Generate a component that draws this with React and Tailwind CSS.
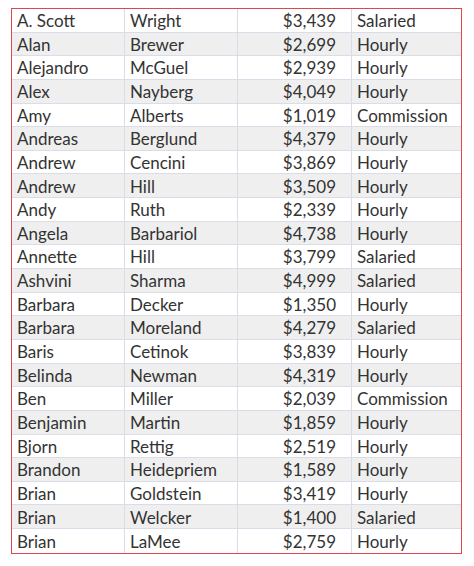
const rows = [
  ["A. Scott", "Wright", "$3,439", "Salaried"],
  ["Alan", "Brewer", "$2,699", "Hourly"],
  ["Alejandro", "McGuel", "$2,939", "Hourly"],
  ["Alex", "Nayberg", "$4,049", "Hourly"],
  ["Amy", "Alberts", "$1,019", "Commission"],
  ["Andreas", "Berglund", "$4,379", "Hourly"],
  ["Andrew", "Cencini", "$3,869", "Hourly"],
  ["Andrew", "Hill", "$3,509", "Hourly"],
  ["Andy", "Ruth", "$2,339", "Hourly"],
  ["Angela", "Barbariol", "$4,738", "Hourly"],
  ["Annette", "Hill", "$3,799", "Salaried"],
  ["Ashvini", "Sharma", "$4,999", "Salaried"],
  ["Barbara", "Decker", "$1,350", "Hourly"],
  ["Barbara", "Moreland", "$4,279", "Salaried"],
  ["Baris", "Cetinok", "$3,839", "Hourly"],
  ["Belinda", "Newman", "$4,319", "Hourly"],
  ["Ben", "Miller", "$2,039", "Commission"],
  ["Benjamin", "Martin", "$1,859", "Hourly"],
  ["Bjorn", "Rettig", "$2,519", "Hourly"],
  ["Brandon", "Heidepriem", "$1,589", "Hourly"],
  ["Brian", "Goldstein", "$3,419", "Hourly"],
  ["Brian", "Welcker", "$1,400", "Salaried"],
  ["Brian", "LaMee", "$2,759", "Hourly"],
];

export default function App() {
  return (
    <div className="w-[474px] h-[566px] bg-white pt-2 pl-[11px]" style={{ fontFamily: "Lato, 'Open Sans', sans-serif" }}>
      <div className="w-[451px] border border-[#e0474c] text-[17px] text-[#333]">
        {rows.map((r, i) => (
          <div
            key={i}
            className={`flex h-[23.65px] items-center ${i % 2 ? "bg-[#efefef]" : "bg-white"} ${i < rows.length - 1 ? "border-b border-[#dadde8]" : ""}`}
          >
            <div className="w-[113px] h-full flex items-center pl-[5px] pt-px border-r border-[#dadde8]">{r[0]}</div>
            <div className="w-[113px] h-full flex items-center pl-[5px] pt-px border-r border-[#dadde8]">{r[1]}</div>
            <div className="w-[114px] h-full flex items-center justify-end pr-[15px] pt-px border-r border-[#dadde8]">{r[2]}</div>
            <div className="flex-1 h-full flex items-center pl-[5px] pt-px">{r[3]}</div>
          </div>
        ))}
      </div>
    </div>
  );
}
